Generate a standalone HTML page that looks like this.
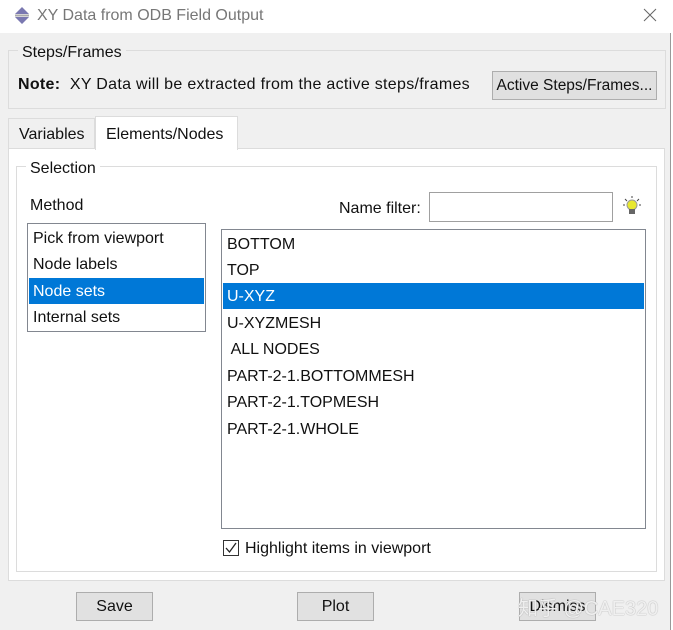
<!DOCTYPE html><html><head><style>
*{box-sizing:border-box}body{margin:0;width:673px;height:630px;overflow:hidden;background:#fff;font-family:"Liberation Sans",sans-serif;font-size:16px;color:#111;position:relative}
.a{position:absolute}
.btn{position:absolute;background:#e1e1e1;border:1px solid #adadad;text-align:center;line-height:28px}
.item{position:absolute;left:0;right:0;height:26px;line-height:28px;padding-left:5px;white-space:pre}
.sel{background:#0078d7;color:#fff}
</style></head><body>
<div class="a" style="left:0;top:0;width:671px;height:630px;background:#f0f0f0;border-right:1px solid #999"></div>
<div class="a" style="left:0;top:0;width:671px;height:33px;background:#fff"></div>
<svg class="a" style="left:12px;top:6px" width="20" height="20"><path d="M10 1 L17 8 H3Z M3 11 H17 L10 18Z" fill="#7a78b0"/><rect x="3" y="8.5" width="14" height="2" fill="#aaa"/></svg>
<div class="a" style="left:37px;top:7px;color:#777;font-size:16px">XY Data from ODB Field Output</div>
<svg class="a" style="left:643px;top:8px" width="14" height="14"><path d="M1 1L13 13M13 1L1 13" stroke="#666" stroke-width="1"/></svg>
<div class="a" style="left:8px;top:50px;width:658px;height:59px;border:1px solid #dcdcdc"></div>
<div class="a" style="left:18px;top:44px;background:#f0f0f0;padding:0 4px">Steps/Frames</div>
<div class="a" style="left:18px;top:76px;letter-spacing:0.3px"><b>Note:</b>&nbsp; XY Data will be extracted from the active steps/frames</div>
<div class="btn" style="left:492px;top:71px;width:165px;height:29px;background:#e0e0e0;font-size:15.5px">Active Steps/Frames...</div>
<div class="a" style="left:8px;top:118px;width:87px;height:30px;border:1px solid #dcdcdc;border-bottom:none;line-height:32px;padding-left:10px">Variables</div>
<div class="a" style="left:95px;top:116px;width:143px;height:34px;background:#fff;border:1px solid #dcdcdc;border-bottom:none;line-height:36px;padding-left:10px;z-index:2">Elements/Nodes</div>
<div class="a" style="left:8px;top:148px;width:657px;height:433px;background:#fff;border:1px solid #dcdcdc"></div>
<div class="a" style="left:16px;top:166px;width:641px;height:406px;border:1px solid #dcdcdc"></div>
<div class="a" style="left:26px;top:160px;background:#fff;padding:0 4px">Selection</div>
<div class="a" style="left:30px;top:197px">Method</div>
<div class="a" style="left:27px;top:223px;width:179px;height:109px;border:1px solid #828790">
<div class="item" style="top:1px">Pick from viewport</div><div class="item" style="top:27px">Node labels</div><div class="item sel" style="top:54px;left:1px;right:1px;padding-left:4px">Node sets</div><div class="item" style="top:80px">Internal sets</div></div>
<div class="a" style="left:339px;top:200px">Name filter:</div>
<div class="a" style="left:429px;top:192px;width:184px;height:30px;border:1px solid #a0a0a0;background:#fff"></div>
<svg class="a" style="left:622px;top:195px" width="20" height="22"><g stroke="#444" stroke-width="1"><line x1="10" y1="1" x2="10" y2="3"/><line x1="3" y1="4" x2="5" y2="6"/><line x1="17" y1="4" x2="15" y2="6"/><line x1="1" y1="10" x2="3" y2="10"/><line x1="19" y1="10" x2="17" y2="10"/></g><circle cx="10" cy="10" r="5" fill="#e8e830" stroke="#999"/><rect x="7" y="14" width="6" height="5" fill="#666"/></svg>
<div class="a" style="left:221px;top:229px;width:425px;height:300px;border:1px solid #828790">
<div class="item" style="top:1px">BOTTOM</div><div class="item" style="top:27px">TOP</div><div class="item sel" style="top:53px;left:1px;right:1px;padding-left:4px">U-XYZ</div><div class="item" style="top:80px">U-XYZMESH</div><div class="item" style="top:106px"> ALL NODES</div><div class="item" style="top:133px">PART-2-1.BOTTOMMESH</div><div class="item" style="top:159px">PART-2-1.TOPMESH</div><div class="item" style="top:186px">PART-2-1.WHOLE</div></div>
<div class="a" style="left:223px;top:540px;width:16px;height:16px;border:1px solid #333;background:#fff"></div>
<svg class="a" style="left:223px;top:540px" width="16" height="16"><path d="M3 8L6.5 12L13 3" stroke="#222" stroke-width="1.3" fill="none"/></svg>
<div class="a" style="left:245px;top:540px">Highlight items in viewport</div>
<div class="btn" style="left:76px;top:592px;width:77px;height:29px">Save</div>
<div class="btn" style="left:297px;top:592px;width:77px;height:29px">Plot</div>
<div class="btn" style="left:519px;top:592px;width:77px;height:29px">Dismiss</div>
<div class="a" style="left:518px;top:592px;color:rgba(255,255,255,.85);font-size:20px;font-family:'Liberation Sans','Noto Sans CJK SC',sans-serif;text-shadow:0 0 1px #888">知乎 @CAE320</div>
</body></html>
